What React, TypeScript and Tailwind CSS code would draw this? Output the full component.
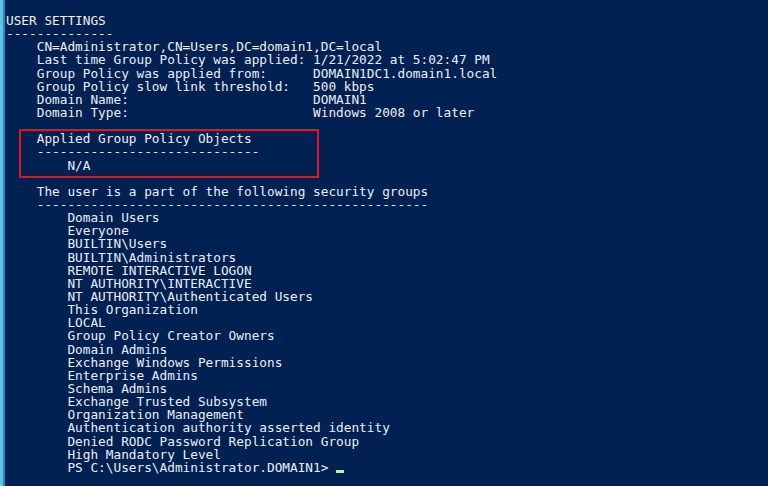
import React from "react";

const header = [
  "USER SETTINGS",
  "--------------",
  "    CN=Administrator,CN=Users,DC=domain1,DC=local",
  "    Last time Group Policy was applied: 1/21/2022 at 5:02:47 PM",
  "    Group Policy was applied from:      DOMAIN1DC1.domain1.local",
  "    Group Policy slow link threshold:   500 kbps",
  "    Domain Name:                        DOMAIN1",
  "    Domain Type:                        Windows 2008 or later",
  "",
];

const gpo = [
  "    Applied Group Policy Objects",
  "    -----------------------------",
  "        N/A",
];

const groups = [
  "",
  "    The user is a part of the following security groups",
  "    ---------------------------------------------------",
  "        Domain Users",
  "        Everyone",
  "        BUILTIN\\Users",
  "        BUILTIN\\Administrators",
  "        REMOTE INTERACTIVE LOGON",
  "        NT AUTHORITY\\INTERACTIVE",
  "        NT AUTHORITY\\Authenticated Users",
  "        This Organization",
  "        LOCAL",
  "        Group Policy Creator Owners",
  "        Domain Admins",
  "        Exchange Windows Permissions",
  "        Enterprise Admins",
  "        Schema Admins",
  "        Exchange Trusted Subsystem",
  "        Organization Management",
  "        Authentication authority asserted identity",
  "        Denied RODC Password Replication Group",
  "        High Mandatory Level",
];

const Line = ({ text }: { text: string }) => (
  <div className="h-[13.15px] whitespace-pre">{text || " "}</div>
);

const App = () => {
  return (
    <div className="w-[768px] h-[486px] overflow-hidden flex bg-[#012152]">
      <div className="w-[3px] bg-[#5fc3e8]" />
      <div className="w-[2px] bg-[#2f86b8]" />
      <div
        className="flex-1 pt-[14px] pl-[1px] text-[#eeeef2] text-[12.75px] leading-[13.15px]"
        style={{ fontFamily: '"DejaVu Sans Mono", "Liberation Mono", monospace' }}
      >
        {header.map((t, i) => (
          <Line key={"h" + i} text={t} />
        ))}
        <div className="relative">
          {gpo.map((t, i) => (
            <Line key={"g" + i} text={t} />
          ))}
          {/* annotation box */}
          <div className="absolute left-[13px] w-[300px] -top-[3px] -bottom-[6px] border-[2.5px] border-[#e4141c]" />
        </div>
        {groups.map((t, i) => (
          <Line key={"s" + i} text={t} />
        ))}
        <div className="h-[13.15px] whitespace-pre flex items-end">
          <span>{"        PS C:\\Users\\Administrator.DOMAIN1> "}</span>
          <span className="w-[8px] h-[3px] mb-[1px] bg-[#c4e8b4]" />
        </div>
      </div>
    </div>
  );
};

export default App;
